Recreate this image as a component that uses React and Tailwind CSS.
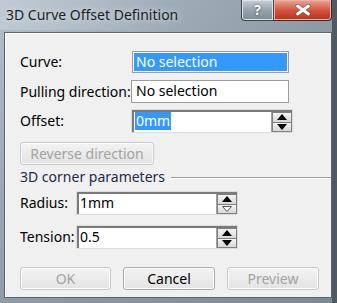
import React from 'react';

const font = { fontFamily: '"Noto Sans", "Open Sans", sans-serif' };

function SpinButtons({ downHollow = false }) {
    return (
        <div className="flex flex-col w-[21px] h-full border-l border-[#a0a0a0]">
            <div className="flex-1 flex items-center justify-center bg-gradient-to-b from-[#f4f4f4] to-[#d8d8d8] border border-[#808080]">
                <svg width="10" height="6" viewBox="0 0 10 6">
                    <polygon points="5,0 10,6 0,6" fill="#000" />
                </svg>
            </div>
            <div className="flex-1 flex items-center justify-center bg-gradient-to-b from-[#f4f4f4] to-[#d8d8d8] border border-t-0 border-[#808080]">
                <svg width="10" height="6" viewBox="0 0 10 6">
                    {downHollow ? (
                        <polygon points="0.5,0.5 9.5,0.5 5,5.5" fill="#fff" stroke="#555" strokeWidth="1" />
                    ) : (
                        <polygon points="0,0 10,0 5,6" fill="#000" />
                    )}
                </svg>
            </div>
        </div>
    );
}

function SpinBox({ value, width, selected = false, downHollow = false }) {
    return (
        <div className={`flex h-[24px] border border-[#dcdcdc] ${width}`}>
            <div className="flex flex-1 border-t-2 border-l-2 border-[#7a7a7a] bg-white">
                <div className="flex-1 flex items-center pl-[1px] pb-[2px] text-[14px] leading-none text-black">
                    {selected ? (
                        <span className="bg-[#3399ff] text-white px-[1px] py-[2px]">{value}</span>
                    ) : (
                        <span>{value}</span>
                    )}
                </div>
                <SpinButtons downHollow={downHollow} />
            </div>
        </div>
    );
}

function DlgButton({ children, disabled = false, width }) {
    return (
        <div
            className={`h-[23px] ${width} rounded-[3px] border ${disabled ? 'border-[#c9c9c9] text-[#a3a3a3]' : 'border-[#acacac] text-black'} bg-gradient-to-b from-[#f3f3f3] to-[#e3e3e3] flex items-center justify-center text-[14px] leading-none shadow-[inset_0_0_0_1px_#fcfcfc]`}
        >
            {children}
        </div>
    );
}

export default function App() {
    return (
        <div className="w-[337px] h-[303px] relative overflow-hidden bg-gradient-to-br from-[#b3bfca] via-[#8f9ca7] to-[#7c8893]" style={font}>
            {/* glassy highlight */}
            <div className="absolute left-0 top-0 w-[337px] h-[30px] bg-gradient-to-r from-[#c5cfd8]/70 via-[#9eabb6]/40 to-[#8b98a3]/30" />
            <div className="absolute right-0 top-0 w-[5px] h-[303px] bg-[#4e5961]" />

            {/* title bar */}
            <div className="relative h-[32px] flex items-center pl-[6px] pb-[4px]">
                <span className="text-[14px] text-[#1b1f24] [text-shadow:0_0_6px_#e8eef3]">3D Curve Offset Definition</span>
            </div>

            {/* caption buttons */}
            <div className="absolute top-0 left-[241px] flex h-[21px]">
                <div className="w-[33px] h-full rounded-bl-[4px] border border-t-0 border-[#3d4750] bg-gradient-to-b from-[#c9d1d8] via-[#96a2ac] to-[#7e8a94] flex items-center justify-center shadow-[inset_0_0_0_1px_#dce3e9]">
                    <span className="text-[14px] font-bold text-white [text-shadow:0_0_2px_#333] leading-none">?</span>
                </div>
                <div className="w-[58px] h-full rounded-br-[4px] border border-t-0 border-l-0 border-[#3d2a26] bg-gradient-to-b from-[#e7a698] via-[#d2553f] to-[#b8301c] flex items-center justify-center shadow-[inset_0_0_0_1px_#eeb2a4]">
                    <svg width="16" height="12" viewBox="0 0 16 12">
                        <path d="M2.5 2 L13.5 10 M13.5 2 L2.5 10" stroke="#555" strokeWidth="4" strokeLinecap="round" />
                        <path d="M2.5 2 L13.5 10 M13.5 2 L2.5 10" stroke="#fff" strokeWidth="2.8" strokeLinecap="round" />
                    </svg>
                </div>
            </div>

            {/* client area */}
            <div className="relative ml-[4px] w-[328px] h-[266px] border border-[#59646d] bg-[#f0f0f0] shadow-[inset_1px_1px_0_#ffffff]">
                <div className="flex flex-col pl-[15px] text-[14px] leading-none text-black">
                    {/* Curve */}
                    <div className="flex items-center h-[22px] mt-[18px]">
                        <span className="w-[112px]">Curve:</span>
                        <div className="w-[157px] h-[22px] border border-[#9c9c9c] bg-white p-[1px]">
                            <div className="w-full h-full bg-[#3399ff] text-white flex items-center pl-[2px] pb-[1px]">No selection</div>
                        </div>
                    </div>

                    {/* Pulling direction */}
                    <div className="flex items-center h-[23px] mt-[7px]">
                        <span className="w-[111px]">Pulling direction:</span>
                        <div className="w-[158px] h-[23px] border border-[#9c9c9c] bg-white flex items-center pl-[4px] pb-[1px]">No selection</div>
                    </div>

                    {/* Offset */}
                    <div className="flex items-center h-[24px] mt-[6px]">
                        <span className="w-[111px]">Offset:</span>
                        <SpinBox value="0mm" width="w-[162px]" selected />
                    </div>

                    {/* Reverse direction */}
                    <div className="mt-[9px]">
                        <DlgButton disabled width="w-[134px]">Reverse direction</DlgButton>
                    </div>

                    {/* group header */}
                    <div className="flex items-center mt-[5px] h-[14px]">
                        <span className="text-[#1f2a44]">3D corner parameters</span>
                        <div className="flex-1 ml-[6px] border-t border-[#a0a0a0] shadow-[0_1px_0_#ffffff]" />
                    </div>

                    {/* Radius */}
                    <div className="flex items-center h-[24px] mt-[7px]">
                        <span className="w-[56px]">Radius:</span>
                        <SpinBox value="1mm" width="w-[162px]" downHollow />
                    </div>

                    {/* Tension */}
                    <div className="flex items-center h-[24px] mt-[10px]">
                        <span className="w-[56px]">Tension:</span>
                        <SpinBox value="0.5" width="w-[162px]" />
                    </div>

                    {/* buttons */}
                    <div className="flex items-center mt-[18px] gap-[12px]">
                        <DlgButton disabled width="w-[91px]">OK</DlgButton>
                        <DlgButton width="w-[92px]">Cancel</DlgButton>
                        <DlgButton disabled width="w-[92px]">Preview</DlgButton>
                    </div>
                </div>
            </div>
        </div>
    );
}
